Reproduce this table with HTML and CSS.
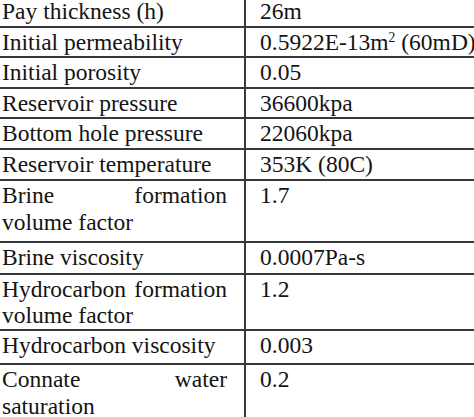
FILE: index.html
```html
<!DOCTYPE html>
<html lang="en">
<head>
<meta charset="utf-8">
<title>Reservoir parameters</title>
<link rel="stylesheet" href="styles.css">
</head>
<body>
<table class="sheet">
  <tbody>
    <tr><td class="label">Pay thickness (h)</td><td class="value">26m</td></tr>
    <tr><td class="label">Initial permeability</td><td class="value">0.5922E-13m<sup>2</sup> (60mD)</td></tr>
    <tr><td class="label">Initial porosity</td><td class="value">0.05</td></tr>
    <tr><td class="label">Reservoir pressure</td><td class="value">36600kpa</td></tr>
    <tr><td class="label">Bottom hole pressure</td><td class="value">22060kpa</td></tr>
    <tr><td class="label">Reservoir temperature</td><td class="value">353K (80C)</td></tr>
    <tr class="pb4"><td class="label">Brine formation volume factor</td><td class="value">1.7</td></tr>
    <tr class="pb1"><td class="label">Brine viscosity</td><td class="value">0.0007Pa-s</td></tr>
    <tr class="tight"><td class="label">Hydrocarbon formation volume factor</td><td class="value">1.2</td></tr>
    <tr class="pb3"><td class="label">Hydrocarbon viscosity</td><td class="value">0.003</td></tr>
    <tr><td class="label">Connate water saturation</td><td class="value">0.2</td></tr>
  </tbody>
</table>
</body>
</html>
```
FILE: styles.css
```css
html, body {
  margin: 0;
  padding: 0;
  background: #ffffff;
  overflow: hidden;
}

body {
  font-family: "Liberation Serif", "Times New Roman", serif;
  font-size: 23.5px;
  color: #141414;
}

.sheet {
  border-collapse: collapse;
  table-layout: fixed;
  width: 560px;
  margin: -5px 0 0 -16px;
}

.sheet td {
  border: 2px solid #383838;
  vertical-align: top;
  line-height: 27.5px;
  padding: 1.1px 0 0 0;
}

.sheet .label {
  width: 225px;
  padding-left: 16px;
  padding-right: 17px;
  text-align: justify;
}

.sheet .value {
  padding-left: 14px;
  white-space: nowrap;
}

.sheet sup {
  font-size: 0.58em;
  line-height: 0;
  vertical-align: 0.62em;
}

.sheet .pb4 td { padding-bottom: 3.9px; }
.sheet .pb1 td { padding-bottom: 1.4px; }
.sheet .pb3 td { padding-bottom: 3.4px; }
.sheet .tight td { line-height: 26.5px; }
```
